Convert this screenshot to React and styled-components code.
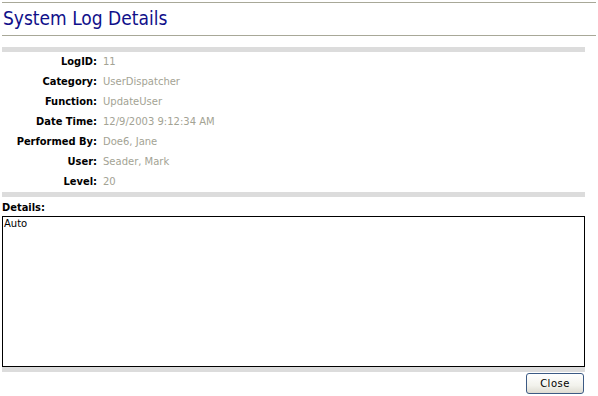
import React from "react";
import styled, { createGlobalStyle } from "styled-components";

const rows = [
  ["LogID:", "11"],
  ["Category:", "UserDispatcher"],
  ["Function:", "UpdateUser"],
  ["Date Time:", "12/9/2003 9:12:34 AM"],
  ["Performed By:", "Doe6, Jane"],
  ["User:", "Seader, Mark"],
  ["Level:", "20"],
];

const GlobalStyle = createGlobalStyle`
  html, body {
    margin: 0;
    padding: 0;
    background: #ffffff;
  }
  body {
    font-family: "DejaVu Sans Condensed", "DejaVu Sans", Verdana, sans-serif;
    font-size: 11px;
  }
`;

const Page = styled.div`
  width: 598px;
  height: 396px;
  padding: 2px 2px 0 2px;
  box-sizing: border-box;
`;

const Header = styled.div`
  border-top: 1px solid #a8a898;
  border-bottom: 1px solid #a8a898;
  height: 32px;
  display: flex;
  align-items: center;
  padding-left: 1px;
`;

const Title = styled.h1`
  margin: 0;
  font-family: "DejaVu Sans Condensed", "DejaVu Sans", sans-serif;
  font-weight: normal;
  font-size: 19px;
  color: #10108a;
  margin-top: -2px;
`;

const Bar = styled.div`
  width: 583px;
  height: 5px;
  background: #dcdcdc;
  margin-top: ${(p) => p.$top || 0}px;
`;

const Fields = styled.div`
  display: grid;
  grid-template-columns: 95px 1fr;
  column-gap: 6px;
`;

const Label = styled.div`
  text-align: right;
  font-weight: bold;
  color: #000;
  height: 20px;
  line-height: 20px;
`;

const Value = styled.div`
  color: #a3a394;
  height: 20px;
  line-height: 20px;
  font-family: "DejaVu Sans", Verdana, sans-serif;
  font-size: 10px;
`;

const DetailsLabel = styled.div`
  font-weight: bold;
  margin-top: 4px;
  line-height: 14px;
`;

const Details = styled.div`
  margin-top: 1px;
  width: 583px;
  height: 151px;
  box-sizing: border-box;
  border: 1px solid #000;
  padding: 0 1px;
  font-family: "DejaVu Sans", Verdana, sans-serif;
  font-size: 10px;
  line-height: 13px;
`;

const Footer = styled.div`
  width: 583px;
  display: flex;
  justify-content: flex-end;
  margin-top: 1px;
`;

const Button = styled.button`
  width: 58px;
  height: 21px;
  margin-right: 1px;
  border: 1px solid #3c5a84;
  border-radius: 3px;
  background: linear-gradient(#ffffff, #f2f2ec 60%, #dedcd2);
  font-family: "DejaVu Sans", Verdana, sans-serif;
  font-size: 10px;
  letter-spacing: 0.5px;
  color: #000;
  padding: 0;
`;

export default function App() {
  return (
    <>
      <GlobalStyle />
      <Page>
        <Header>
          <Title>System Log Details</Title>
        </Header>
        <Bar $top={11} />
        <Fields>
          {rows.map(([label, value]) => (
            <React.Fragment key={label}>
              <Label>{label}</Label>
              <Value>{value}</Value>
            </React.Fragment>
          ))}
        </Fields>
        <Bar />
        <DetailsLabel>Details:</DetailsLabel>
        <Details>Auto</Details>
        <Bar />
        <Footer>
          <Button>Close</Button>
        </Footer>
      </Page>
    </>
  );
}
